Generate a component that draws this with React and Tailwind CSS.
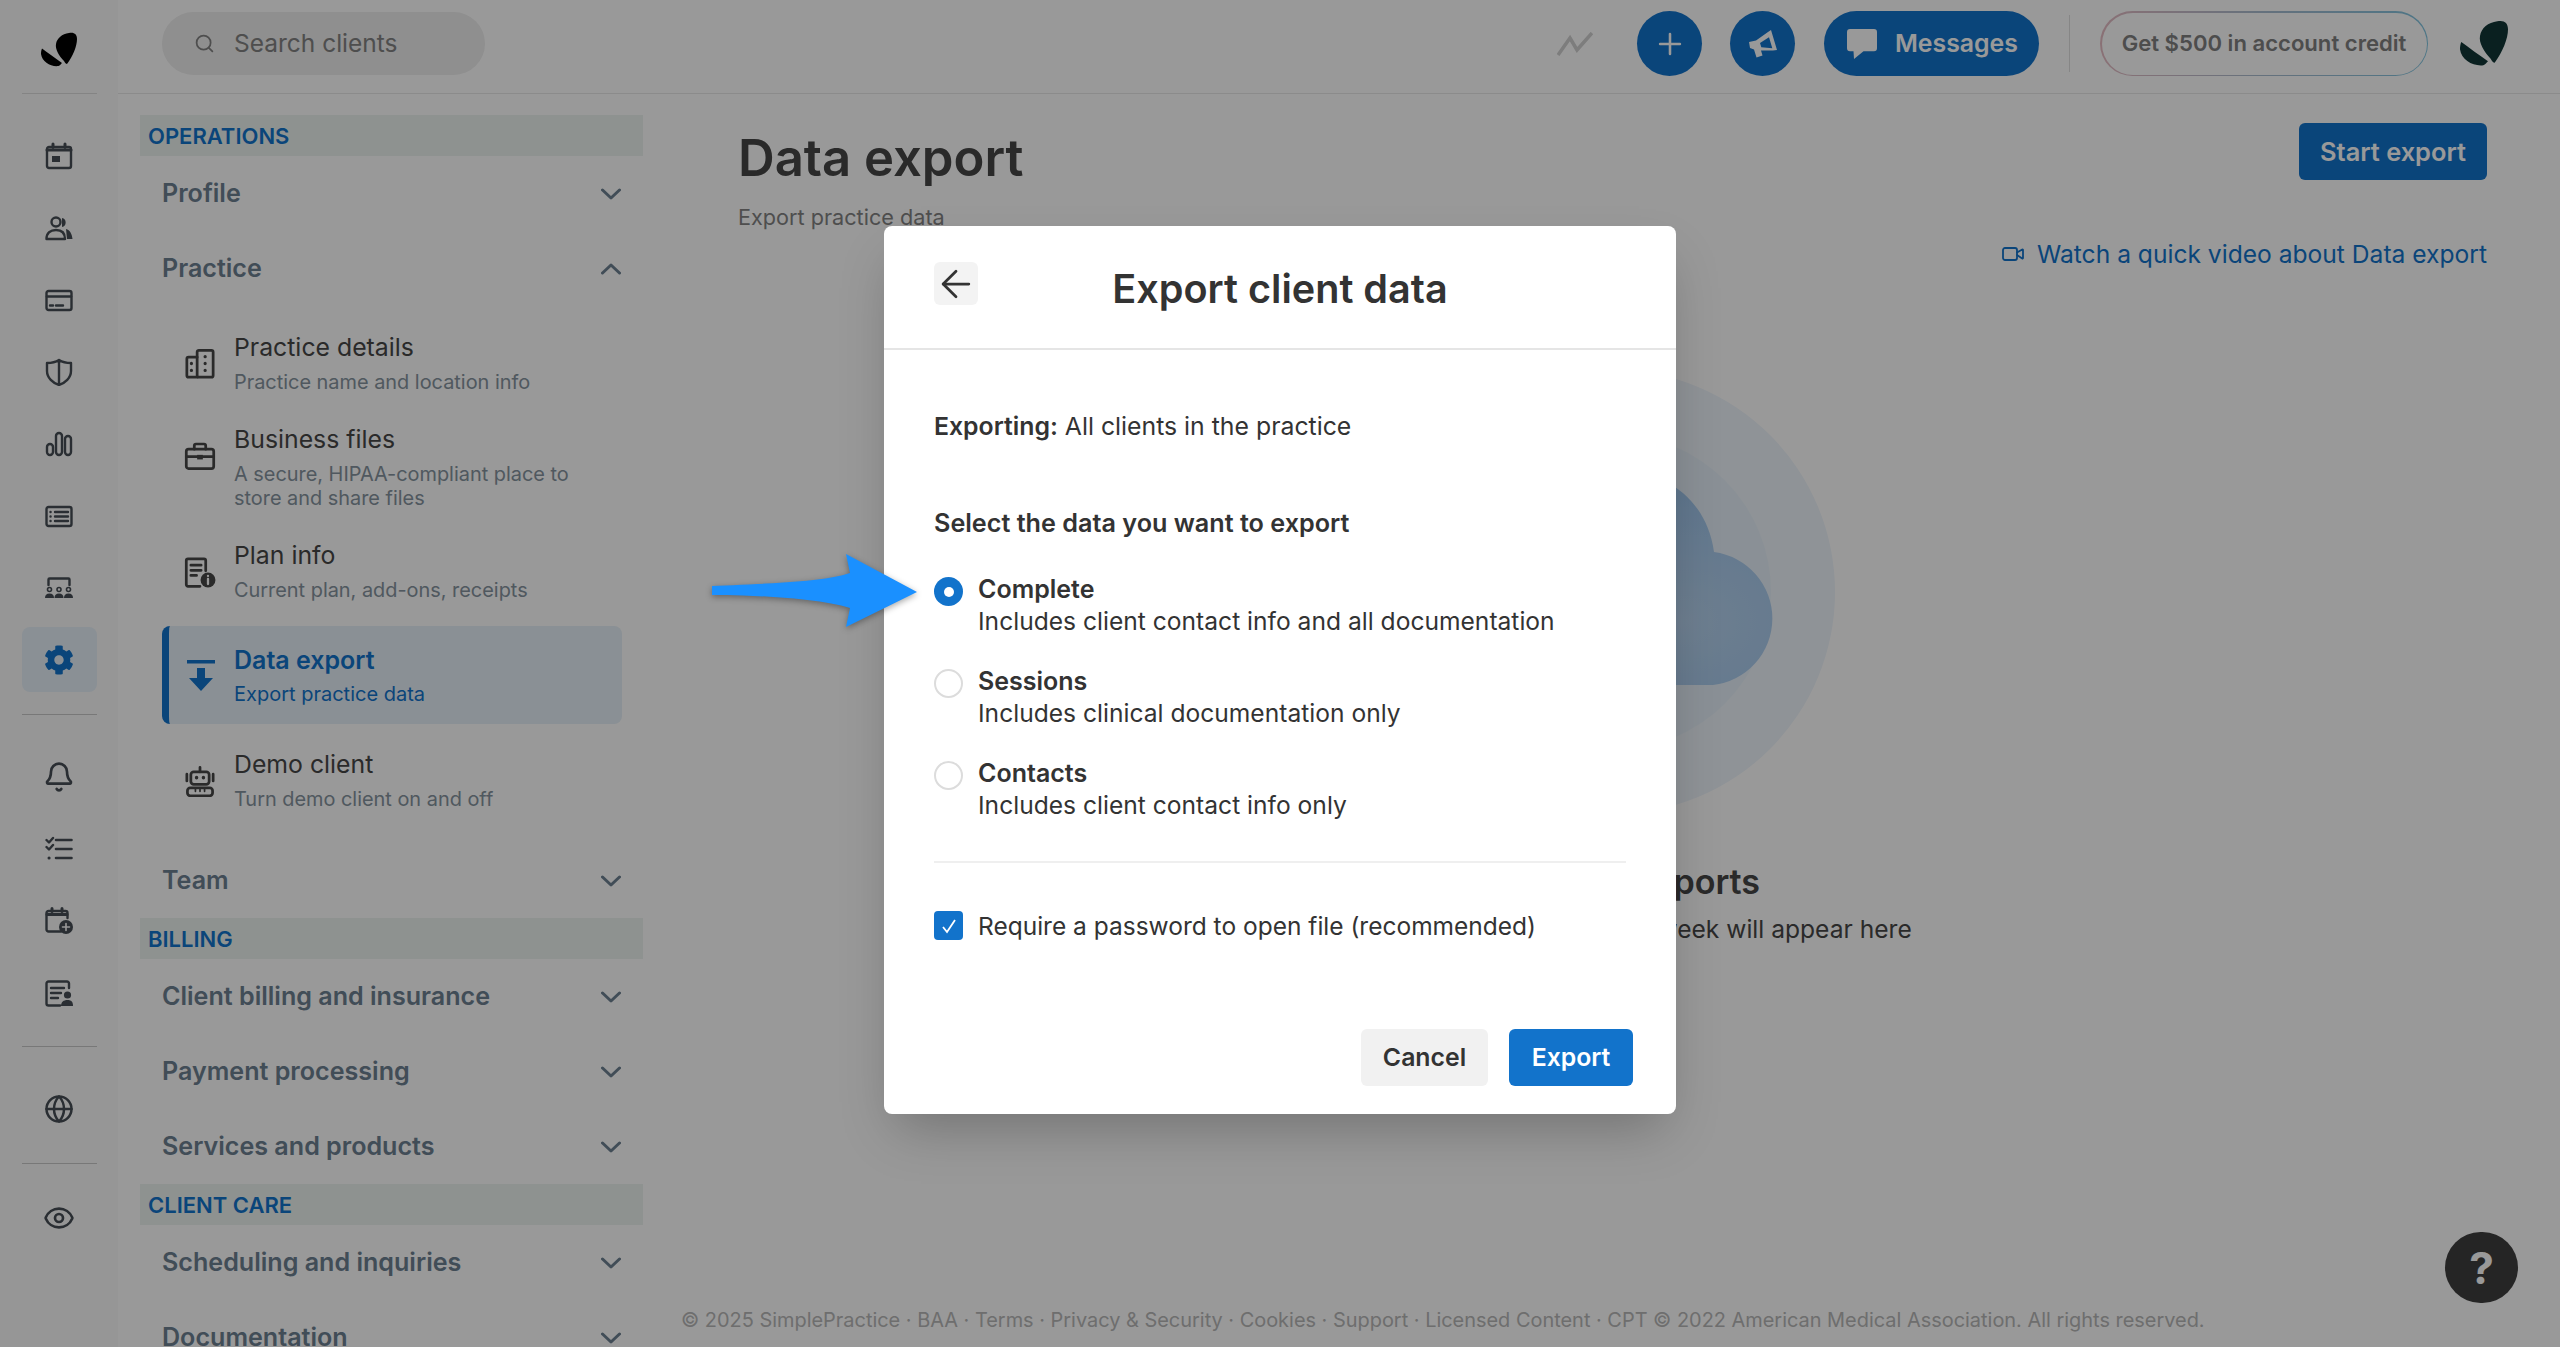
import React from 'react';
import { ArrowLeft, Bell, Eye, Globe, Plus, Search, Video } from 'lucide-react';
import { FaCog } from 'react-icons/fa';

const Icon = ({ children, className = 'w-7 h-7' }) => (
  <svg viewBox="0 0 28 28" fill="none" stroke="currentColor" strokeWidth="2.4" strokeLinecap="round" strokeLinejoin="round" className={className}>
    {children}
  </svg>
);

const Logo = ({ className }) => (
  <svg viewBox="0 0 36 36" className={className} fill="currentColor">
    <path d="M23 29C18 24 14 17 15 12C16 6 21 2 28 1C33 0 36 2 36 7C36 14 32 24 26 32C25 32 24 31 23 29Z" />
    <path d="M1 16.5C7 21 14 26 21 31C20 32 19 33.5 17.5 34C10 35 1 30 0 22C0 20 .3 18 1 16.5Z" />
  </svg>
);

const railTop = [
  <Icon key="cal">
    <rect x="2" y="5" width="24" height="21" rx="2" />
    <path d="M2 8h24M8 2v3M20 2v3" strokeWidth="3" />
    <rect x="7" y="14" width="8" height="6" fill="currentColor" stroke="none" />
  </Icon>,
  <Icon key="people">
    <circle cx="11" cy="8" r="4.5" />
    <path d="M1.5 25c0-6 4-9 9.5-9s9 3 9 9z" />
    <path d="M17 4a4.6 4.6 0 0 1 0 9zM21 15c4 1 6 5 6.5 10H22z" fill="currentColor" stroke="none" />
  </Icon>,
  <Icon key="card">
    <rect x="1.5" y="5" width="25" height="19" rx="2" />
    <path d="M2 10.5h24" strokeWidth="2.6" />
    <path d="M5 19.5h3M11 19.5h7" />
  </Icon>,
  <Icon key="shield">
    <path d="M14 2c4 2.5 8 3 12 3v8c0 7-6 12-12 14C8 25 2 20 2 13V5c4 0 8-.5 12-3zM14 2v25" />
  </Icon>,
  <Icon key="chart">
    <rect x="2" y="14" width="6" height="11" rx="3" />
    <rect x="11" y="3" width="6" height="22" rx="3" />
    <rect x="20" y="6" width="6" height="19" rx="3" />
  </Icon>,
  <Icon key="list">
    <rect x="1.5" y="5" width="25" height="19" rx="2" />
    <path d="M10 10h13M10 14.5h13M10 19h13M5.5 10h.1M5.5 14.5h.1M5.5 19h.1" />
  </Icon>,
  <Icon key="team">
    <path d="M3.5 11V5.5a1 1 0 0 1 1-1h19a1 1 0 0 1 1 1V11" />
    <circle cx="4.5" cy="15.5" r="2" strokeWidth="1.6" />
    <circle cx="14" cy="15.5" r="2" strokeWidth="1.6" />
    <circle cx="23.5" cy="15.5" r="2" strokeWidth="1.6" />
    <path d="M0 24c0-3 1.5-4.5 4.5-4.5S9 21 9 24zM9.5 24c0-3 1.5-4.5 4.5-4.5s4.5 1.5 4.5 4.5zM19 24c0-3 1.5-4.5 4.5-4.5S28 21 28 24z" fill="currentColor" stroke="none" />
  </Icon>,
];

const railBottom = [
  <Bell key="bell" className="w-8 h-8" strokeWidth={2} />,
  <Icon key="check">
    <path d="M1.5 5l2.5 2.5L8 3M1.5 12l2.5 2.5L8 10" />
    <path d="M11 5h15.5M11 14h15.5M11 23h15.5" strokeWidth="2.6" />
    <path d="M4 23h.1" strokeWidth="3" />
  </Icon>,
  <Icon key="calplus">
    <path d="M16 24.5H3.5a2 2 0 0 1-2-2V6a2 2 0 0 1 2-2h17a2 2 0 0 1 2 2v5" />
    <path d="M2 7.5h20M7 1.5v3M17 1.5v3" strokeWidth="3" />
    <circle cx="21" cy="20" r="7" fill="currentColor" stroke="none" />
    <path d="M21 16.5v7M17.5 20h7" stroke="#fff" strokeWidth="1.6" />
  </Icon>,
  <Icon key="docuser">
    <path d="M24 9V4.5a2 2 0 0 0-2-2H3.5a2 2 0 0 0-2 2v20a2 2 0 0 0 2 2H15" />
    <path d="M6 9h13M6 14h10M6 19h7" />
    <circle cx="22.5" cy="16" r="3.6" fill="currentColor" stroke="none" />
    <path d="M16 27c0-4 2.5-6 6.5-6s5.5 2 5.5 6z" fill="currentColor" stroke="none" />
  </Icon>,
];

const subItems = [
  {
    title: 'Practice details',
    lines: ['Practice name and location info'],
    h: 'h-[92px]',
    icon: (
      <Icon className="w-8 h-8">
        <rect x="11.5" y="2" width="14" height="23.5" rx="1.5" />
        <path d="M11.5 8H4a1.5 1.5 0 0 0-1.5 1.5v14.5A1.5 1.5 0 0 0 4 25.5h7.5" />
        <path d="M6.5 13.5v.1M6.5 19.5v.1M18.5 7.5v.1M18.5 13.5v.1M18.5 19.5v.1" strokeWidth="2.8" />
      </Icon>
    ),
  },
  {
    title: 'Business files',
    lines: ['A secure, HIPAA-compliant place to', 'store and share files'],
    h: 'h-[116px]',
    icon: (
      <Icon className="w-8 h-8">
        <rect x="2" y="8" width="24" height="17" rx="2" />
        <path d="M9 8V5a1.5 1.5 0 0 1 1.5-1.5h7A1.5 1.5 0 0 1 19 5v3M2 14.5h24" />
        <rect x="11.5" y="13" width="5" height="4" fill="currentColor" stroke="none" />
      </Icon>
    ),
  },
  {
    title: 'Plan info',
    lines: ['Current plan, add-ons, receipts'],
    h: 'h-[105px]',
    icon: (
      <Icon className="w-8 h-8">
        <path d="M19 13V4a1.5 1.5 0 0 0-1.5-1.5h-14A1.5 1.5 0 0 0 2 4v21a1.5 1.5 0 0 0 1.5 1.5H14" />
        <path d="M6 8h9M6 12.5h9M6 17h5" />
        <circle cx="21" cy="21" r="6.5" fill="currentColor" stroke="none" />
        <path d="M21 20v4.5M21 17.5v.1" stroke="#fff" strokeWidth="2" />
      </Icon>
    ),
  },
];

const Chevron = ({ up }) => (
  <svg viewBox="0 0 20 12" className="w-5 h-3 text-[#6d8092]" fill="none" stroke="currentColor" strokeWidth="3" strokeLinecap="round" strokeLinejoin="round">
    <path d={up ? 'M1.5 10 10 2l8.5 8' : 'M1.5 2 10 10l8.5-8'} />
  </svg>
);

const Section = ({ children }) => (
  <div className="h-[41px] bg-[#edf3f0] pl-2 pt-[2px] flex items-center text-[22px] font-semibold text-[#1273cb]">{children}</div>
);

const Group = ({ children, up }) => (
  <div className="h-[75px] pl-[22px] pr-[22px] flex items-center justify-between text-[#6d8092] text-[25.1px] font-semibold">
    <span className="pt-[1px]">{children}</span>
    <Chevron up={up} />
  </div>
);

const SubItem = ({ item }) => (
  <div className={`${item.h} flex pt-[17px] pl-[44px]`}>
    <div className="w-[50px] shrink-0 flex items-center self-start h-[68px] text-[#474747]">{item.icon}</div>
    <div>
      <div className="text-[24.8px] leading-[34px] text-[#474747]">{item.title}</div>
      <div className="mt-[6px] text-[19.9px] leading-[24px] text-[#85939e]">
        {item.lines.map((l) => (
          <div key={l}>{l}</div>
        ))}
      </div>
    </div>
  </div>
);

const RadioRow = ({ title, desc, on, className = '' }) => (
  <div className={`flex gap-[15px] ${className}`}>
    <div className={`w-[29px] h-[29px] mt-[4px] rounded-full shrink-0 flex items-center justify-center ${on ? 'bg-[#1273cb]' : 'border-2 border-[#dcdcdc]'}`}>
      {on && <div className="w-[10px] h-[10px] rounded-full bg-white" />}
    </div>
    <div className="leading-[32px] text-[#333]">
      <div className="text-[25px] font-semibold">{title}</div>
      <div className="text-[24.6px]">{desc}</div>
    </div>
  </div>
);

export default function App() {
  return (
    <div className="relative w-[2560px] h-[1347px] overflow-hidden bg-white font-[Inter,sans-serif] flex">
      {/* icon rail */}
      <div className="w-[118px] shrink-0 bg-[#fbfbfb] flex flex-col items-center text-[#464e55]">
        <div className="w-[75px] h-[94px] shrink-0 border-b border-[#dcdcdc] flex items-center justify-center">
          <Logo className="w-9 h-9 mt-[6px] text-black" />
        </div>
        <div className="mt-[26px] flex flex-col items-center">
          {railTop.map((ic) => (
            <div key={ic.key} className="h-[72px] flex items-center">{ic}</div>
          ))}
          <div className="mt-[3px] w-[75px] h-[65px] rounded-lg bg-[#e6f0f8] flex items-center justify-center text-[#1273cb]">
            <FaCog className="w-[30px] h-[30px]" />
          </div>
        </div>
        <div className="mt-[22px] w-[75px] border-t border-[#c8c8c8]" />
        <div className="mt-[26px] flex flex-col items-center">
          {railBottom.map((ic) => (
            <div key={ic.key} className="h-[72px] flex items-center">{ic}</div>
          ))}
        </div>
        <div className="mt-[17px] w-[75px] border-t border-[#c8c8c8]" />
        <div className="mt-[26px] h-[72px] flex items-center"><Globe className="w-[30px] h-[30px]" strokeWidth={2} /></div>
        <div className="mt-[18px] w-[75px] border-t border-[#c8c8c8]" />
        <div className="mt-[18px] h-[72px] flex items-center"><Eye className="w-8 h-8" strokeWidth={2} /></div>
      </div>

      <div className="flex-1 min-w-0 flex flex-col">
        {/* top bar */}
        <div className="h-[94px] shrink-0 border-b border-[#e8e8e8] flex items-center pl-[44px] pr-[50px] pb-[6px]">
          <div className="w-[323px] h-[63px] rounded-full bg-[#eeeeee] flex items-center pl-[32px] gap-[19px] text-[#838383]">
            <Search className="w-[21px] h-[21px]" strokeWidth={2} />
            <span className="text-[24.5px]">Search clients</span>
          </div>
          <div className="ml-auto flex items-center">
            <svg viewBox="0 0 36 24" className="w-9 h-6 text-[#d0d0d0]" fill="none" stroke="currentColor" strokeWidth="3.5">
              <path d="M1 23 13 6l7 12L35 1" />
            </svg>
            <div className="ml-[44px] w-[65px] h-[65px] rounded-full bg-[#1273cb] text-white flex items-center justify-center">
              <Plus className="w-[34px] h-[34px]" strokeWidth={1.8} />
            </div>
            <div className="ml-[28px] w-[65px] h-[65px] rounded-full bg-[#1273cb] text-white flex items-center justify-center">
              <svg viewBox="0 0 30 30" className="w-[30px] h-[30px]" fill="currentColor" fillRule="evenodd">
                <path d="M1 13 8 11.5 20 3 23 1 29 21 25 21.5 13 21.5 14.5 26.5 8.5 28.5 6 20.5 2 19ZM12 14 21 8.3 24.3 19.3 13.3 18.3Z" />
              </svg>
            </div>
            <div className="ml-[29px] w-[215px] h-[65px] rounded-full bg-[#1273cb] text-white flex items-center pl-[23px] gap-[18px]">
              <svg viewBox="0 0 30 30" className="w-[30px] h-[30px]" fill="currentColor">
                <path d="M3 0h24a3 3 0 0 1 3 3v16.3a3 3 0 0 1-3 3H16.5L7 30l-.5-7.7H3a3 3 0 0 1-3-3V3a3 3 0 0 1 3-3z" />
              </svg>
              <span className="text-[24.8px] font-semibold">Messages</span>
            </div>
            <div className="ml-[30px] w-px h-[57px] bg-[#e0e0e0]" />
            <div className="ml-[30px] w-[328px] h-[65px] rounded-full p-[1.5px] bg-gradient-to-r from-[#e6bcc4] via-[#a8bcd0] to-[#80c4e0]">
              <div className="w-full h-full rounded-full bg-white flex items-center justify-center text-[22.1px] font-semibold text-[#808080]">
                Get $500 in account credit
              </div>
            </div>
            <Logo className="ml-[30px] w-[52px] h-[48px] text-[#113636]" />
          </div>
        </div>

        <div className="flex-1 min-h-0 flex">
          {/* settings nav */}
          <div className="w-[542px] shrink-0 pl-[22px] pr-[17px] pt-[21px] overflow-hidden">
            <Section>OPERATIONS</Section>
            <Group>Profile</Group>
            <Group up>Practice</Group>
            <div className="mt-[7px]">
              {subItems.map((it) => (
                <SubItem key={it.title} item={it} />
              ))}
              <div className="ml-[22px] mr-[21px] h-[98px] rounded-lg border-l-[7px] border-[#1273cb] bg-[#e6f0f8] flex pt-[17px] pl-[18px]">
                <div className="w-[47px] shrink-0 flex items-center self-start h-[66px] text-[#1273cb]">
                  <svg viewBox="0 0 28 32" className="w-7 h-8" fill="currentColor">
                    <path d="M0 0h28v3.5H0zM10 8h8v10h8L14 31 2 18h8z" />
                  </svg>
                </div>
                <div>
                  <div className="text-[25px] leading-[34px] font-semibold text-[#1273cb]">Data export</div>
                  <div className="mt-[5px] text-[20px] leading-[24px] text-[#1273cb]">Export practice data</div>
                </div>
              </div>
              <SubItem
                item={{
                  title: 'Demo client',
                  lines: ['Turn demo client on and off'],
                  h: 'h-[113px] mt-[6px]',
                  icon: (
                    <Icon className="w-8 h-8">
                      <rect x="6" y="6" width="16" height="11" rx="2.5" />
                      <path d="M14 2v4M2.5 8v6M25.5 8v6" />
                      <path d="M11 11v.1M17 11v.1" strokeWidth="3" />
                      <rect x="3" y="20" width="22" height="7" rx="2.5" />
                      <path d="M10 20v3M14 20v3M18 20v3" strokeWidth="1.5" />
                    </Icon>
                  ),
                }}
              />
            </div>
            <Group>Team</Group>
            <Section>BILLING</Section>
            <Group>Client billing and insurance</Group>
            <Group>Payment processing</Group>
            <Group>Services and products</Group>
            <Section>CLIENT CARE</Section>
            <Group>Scheduling and inquiries</Group>
            <Group>Documentation</Group>
          </div>

          {/* main */}
          <div className="flex-1 min-w-0 flex flex-col">
            <div className="pl-[78px] pr-[73px] pt-[29px]">
              <div className="flex justify-between items-start">
                <div className="mt-[5px]">
                  <h1 className="text-[50.8px] leading-[60px] font-semibold text-[#474747]">Data export</h1>
                  <div className="mt-[14px] text-[21.65px] leading-[30px] text-[#838383]">Export practice data</div>
                </div>
                <button className="w-[188px] h-[57px] pt-[2px] rounded-md bg-[#1273cb] text-white text-[25.4px] font-semibold">Start export</button>
              </div>
              <div className="mt-[4px] flex items-center justify-end gap-[12px] text-[24.6px] leading-[36px] text-[#1273cb]">
                <Video className="w-[24px] h-[24px]" strokeWidth={1.8} />
                <span>Watch a quick video about Data export</span>
              </div>
              <div className="mt-[98px] flex flex-col items-center">
                <svg viewBox="0 0 444 444" className="w-[444px] h-[444px]">
                  <defs>
                    <radialGradient id="cloud" cx="0.7" cy="0.7" r="0.7">
                      <stop offset="0" stopColor="#b8d4f0" />
                      <stop offset="1" stopColor="#9cc4ec" />
                    </radialGradient>
                  </defs>
                  <circle cx="222" cy="222" r="222" fill="#eef5fc" />
                  <circle cx="222" cy="222" r="158" fill="#e6f1fa" />
                  <path d="M120 315H322A67 67 0 0 0 323 182C316 130 275 102 235 102C170 102 140 150 140 190C100 190 80 250 80 260C80 290 100 315 120 315Z" fill="url(#cloud)" />
                </svg>
                <div className="mt-[46px] text-[34.1px] leading-[44px] font-semibold text-[#474747]">No recent exports</div>
                <div className="mt-[7px] text-[24.6px] leading-[36px] text-[#474747]">Exports you create in the last week will appear here</div>
              </div>
            </div>
            <div className="mt-auto pb-[14px] pl-[21px] text-[19.93px] leading-[26px] text-[#b7b7b7] whitespace-nowrap">
              © 2025 SimplePractice · BAA · Terms · Privacy &amp; Security · Cookies · Support · Licensed Content · CPT © 2022 American Medical Association. All rights reserved.
            </div>
          </div>
        </div>
      </div>

      <div className="absolute right-[42px] bottom-[44px] w-[73px] h-[71px] rounded-full bg-[#3f3f3f] flex items-center justify-center text-white text-[44px] font-bold">?</div>

      {/* backdrop and dialog */}
      <div className="absolute inset-0 bg-black/40 flex justify-center items-start pt-[226px]">
        <div className="w-[792px] h-[888px] rounded-lg bg-white shadow-2xl">
          <div className="relative h-[124px] border-b-2 border-[#e5e5e5] flex items-center justify-center">
            <button className="absolute left-[50px] top-[36px] w-[44px] h-[43px] rounded-md bg-[#f3f3f3] flex items-center justify-center text-[#333]">
              <ArrowLeft className="w-[44px] h-[44px] shrink-0" strokeWidth={1.5} />
            </button>
            <h2 className="mt-[6px] text-[39.6px] font-semibold text-[#333]">Export client data</h2>
          </div>
          <div className="pl-[50px] pr-[50px] pt-[58px] text-[24.8px] text-[#333]">
            <div className="leading-[36px]"><span className="font-semibold">Exporting:</span> All clients in the practice</div>
            <div className="mt-[61px] leading-[36px] text-[25.2px] font-semibold">Select the data you want to export</div>
            <RadioRow className="mt-[32px]" on title="Complete" desc="Includes client contact info and all documentation" />
            <RadioRow className="mt-[28px]" title="Sessions" desc="Includes clinical documentation only" />
            <RadioRow className="mt-[28px]" title="Contacts" desc="Includes client contact info only" />
            <div className="mt-[40px] border-t-2 border-[#efefef]" />
            <div className="mt-[47px] flex gap-[15px] leading-[32px]">
              <div className="w-[29px] h-[29px] mt-[1px] rounded bg-[#1273cb] flex items-center justify-center shrink-0">
                <svg viewBox="0 0 16 16" className="w-4 h-4" fill="none" stroke="#fff" strokeWidth="1.8"><path d="M2 9l4 5 8-12" /></svg>
              </div>
              <span className="text-[24.5px]">Require a password to open file (recommended)</span>
            </div>
            <div className="mt-[87px] mr-[-7px] flex justify-end gap-[21px]">
              <button className="w-[127px] h-[57px] rounded-md bg-[#f1f1f1] font-semibold">Cancel</button>
              <button className="w-[124px] h-[57px] rounded-md bg-[#1273cb] text-white font-semibold">Export</button>
            </div>
          </div>
        </div>
      </div>

      {/* annotation arrow */}
      <svg viewBox="0 0 210 76" className="absolute left-[711px] top-[553px] w-[210px] h-[76px] drop-shadow-[0_2px_3px_rgba(0,0,0,0.35)]">
        <path d="M1 33C40 31 110 30 139 20L135 1L206 39L135 74L139 55C110 46 50 42 1 42Z" fill="#1a90ff" />
      </svg>
    </div>
  );
}
